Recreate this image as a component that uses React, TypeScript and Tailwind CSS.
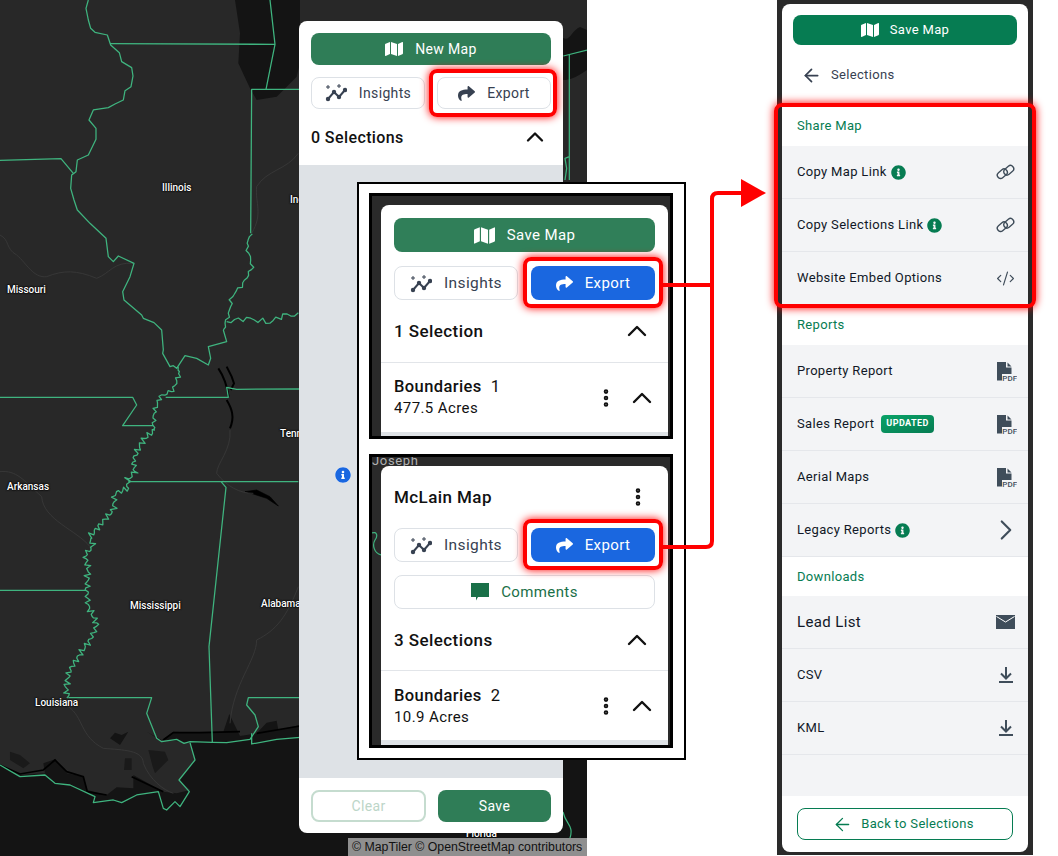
import React from 'react';
import { ArrowLeft, ChevronRight, ChevronUp, CodeXml, EllipsisVertical } from 'lucide-react';
import { FaInfoCircle, FaMap, FaShare } from 'react-icons/fa';

const labelClass = "absolute text-[10px] leading-none font-medium text-white whitespace-nowrap [text-shadow:0_0_2px_#000,0_0_2px_#000,0_0_1px_#000]";

const mapLabels = [
  { text: 'Illinois', pos: 'left-[162px] top-[183px]' },
  { text: 'Indiana', pos: 'left-[290px] top-[195px]' },
  { text: 'Missouri', pos: 'left-[7px] top-[285px]' },
  { text: 'Tennessee', pos: 'left-[280px] top-[429px]' },
  { text: 'Arkansas', pos: 'left-[7px] top-[482px]' },
  { text: 'Alabama', pos: 'left-[261px] top-[599px]' },
  { text: 'Mississippi', pos: 'left-[130px] top-[601px]' },
  { text: 'Louisiana', pos: 'left-[35px] top-[698px]' },
  { text: 'Florida', pos: 'left-[466px] top-[829px]' },
];

// rivers: subdivide a traced line and push points sideways so it meanders
function wiggle(pts: number[][], amp: number, step: number) {
  let d = `M${pts[0][0]} ${pts[0][1]}`;
  let n = 0;
  for (let i = 1; i < pts.length; i++) {
    const [x0, y0] = pts[i - 1];
    const [x1, y1] = pts[i];
    const len = Math.hypot(x1 - x0, y1 - y0);
    const count = Math.max(1, Math.round(len / step));
    for (let k = 1; k <= count; k++) {
      n++;
      const t = k / count;
      const off = amp * Math.sin(n * 1.9) + amp * 0.6 * Math.sin(n * 3.3);
      const x = x0 + (x1 - x0) * t + (-(y1 - y0) / len) * off;
      const y = y0 + (y1 - y0) * t + ((x1 - x0) / len) * off;
      d += `L${x.toFixed(1)} ${y.toFixed(1)}`;
    }
  }
  return d;
}

const lowerRiver = wiggle([[465, 0], [428, 30], [400, 90], [405, 130], [380, 150], [385, 175], [345, 190], [340, 240], [300, 285], [270, 320], [278, 350], [255, 375], [265, 420], [260, 480], [265, 530], [292, 585], [270, 630], [235, 680], [210, 720], [197, 770], [205, 803]], 7, 6);
const midRiver = wiggle([[460, 1290], [462, 1240], [480, 1190], [520, 1170], [540, 1115], [530, 1105]], 5, 7);
const ohioRiver = wiggle([[680, 965], [740, 955], [810, 968], [850, 945], [895, 945]], 6, 12);
const wabash = wiggle([[670, 990], [690, 930], [695, 890], [730, 850], [758, 800], [740, 740], [752, 700]], 4, 10);

const MapShapes: React.FC = () => (
  <svg className="absolute inset-0" width="587" height="856" viewBox="0 0 587 856" fill="none">
    <rect x="300" y="740" width="287" height="116" fill="#141414" />
    <path d="M563 38C570 42 572 30 580 27L587 30V70C575 78 570 80 563 80Z" fill="#141414" />
    {/* north half, traced at 3x */}
    <g transform="scale(0.33333)">
      <path d="M705 0L720 100L715 190L750 265L770 300L830 290L890 230L900 190V0Z" fill="#141414" />
      <path d="M0 705C30 720 15 745 50 765C80 790 100 835 140 830C190 810 230 810 290 835C330 820 340 785 400 790M895 460C860 510 800 510 770 560C765 610 790 640 755 700" stroke="#3a3a3a" strokeWidth="2.5" />
      <path d="M655 1105C672 1130 680 1150 686 1190M680 1100L695 1130L702 1150L692 1170M680 1200C695 1225 705 1250 690 1285" stroke="#000" strokeWidth="6" />
      <g stroke="#3fb47f" strokeWidth="3.8" strokeLinejoin="round">
        <path d="M265 0L258 25L265 60L272 85L285 97L322 105L332 135L358 158L365 185L395 203L399 228L393 260L375 272L370 300L345 312L325 323L280 330L267 360L288 385L288 418L265 465L232 480L228 515L215 525L212 565L222 600L232 630L270 670L318 715L325 770L340 785L355 768L402 790L390 830L368 875L372 900L425 945L430 955L462 968L485 990L490 1050L488 1060L510 1100L520 1097L530 1105L555 1067L590 1075L625 1095L632 1075L625 1040L680 1025L670 990" />
        <path d={wabash} />
        <path d="M752 700L755 268H900" />
        <path d="M330 131L825 133M810 0L825 133L798 268M0 481L183 476L220 520M0 1192H398L410 1215L368 1277H460" />
        <path d={midRiver} />
        <path d="M497 1192L685 1192L680 1162L710 1168L900 1167" />
        <path d={ohioRiver} />
        <path d="M1690 168L1761 150M1708 165V540M1708 470L1695 475L1700 505L1695 540" />
      </g>
    </g>
    {/* south half, traced at 3x */}
    <g transform="translate(0 430) scale(0.33333)">
      <path d="M0 1005L60 1035L135 1030L130 1000L165 988L200 1030L250 1040L262 1080L320 1095L350 1072L400 1075L400 1035L490 1085L530 1090L570 1080L537 1050L585 990L570 938L500 930L480 930L440 905L385 905L360 945L330 925L345 908L365 915L385 905L440 905L485 930L520 905L600 908L670 905L688 852L720 918L770 910L800 878L830 872L835 900L900 885V1278H0Z" fill="#141414" />
      <path d="M30 965L60 975L90 1000L70 1015L30 990ZM375 985L395 985L395 1020L372 1020ZM445 960L495 965L505 990L465 1030L458 1010Z" fill="#1a1a1a" />
      <path d="M735 185L770 180L810 200L835 228L800 205L760 192Z" fill="#000" stroke="#000" strokeWidth="2" />
      <path d="M0 1005L60 1032L130 1020L165 990L200 1025L250 1040L262 1085L320 1095M395 1040L490 1085M490 930L520 908L600 908L720 905M770 910L900 888" stroke="#000" strokeWidth="5" />
      <path d="M0 125C50 120 70 150 125 200C130 270 230 300 270 350M690 0C695 60 650 100 650 130C680 170 720 190 760 190M895 470C860 560 830 600 770 630C770 690 700 760 690 880M205 830C250 860 240 920 310 955C370 960 430 960 430 1000C450 1050 490 1080 520 1090" stroke="#3a3a3a" strokeWidth="2.5" />
      <g stroke="#3fb47f" strokeWidth="3.8" strokeLinejoin="round">
        <path d={lowerRiver} />
        <path d="M0 481H258M385 155H665L895 155M663 155L678 172L627 650L637 937" />
        <path d="M205 803H455L440 850L470 925L485 935L530 928L552 940L570 935L637 937L680 938L750 928L775 890L765 855L740 825L745 803H900" />
        <path d="M755 910V942L830 928L900 922" />
        <path d="M0 1005L60 1040L135 1035L165 1060L210 1065L285 1100L280 1118L340 1110L365 1118L410 1095L475 1085L490 1135L500 1140L525 1115L540 1130L568 1085L537 1050L585 990L570 938" />
      </g>
    </g>
    <path d="M563 812C566 825 574 825 570 838L566 856M478 856L480 838" stroke="#3fb47f" strokeWidth="1.2" />
  </svg>
);

const InsightsIcon: React.FC = () => (
  <svg width="22" height="18" viewBox="0 0 22 18" fill="none" stroke="#374151">
    <path d="M3 15L9 8L14 13L20 6" strokeWidth="2" />
    <g fill="#374151" stroke="none">
      <circle cx="3" cy="15" r="2.2" />
      <circle cx="9" cy="8" r="2.2" />
      <circle cx="14" cy="13" r="2.2" />
      <circle cx="20" cy="6" r="2.2" />
    </g>
    <path d="M3 1V5M1 3H5M14 0V4M12 2H16" strokeWidth="1" />
  </svg>
);

const CommentIcon: React.FC = () => (
  <svg width="18" height="18" viewBox="0 0 18 18" fill="#1a7048">
    <path d="M0 0H18V14H7L5 17.500V14H0Z" />
  </svg>
);

const PdfIcon: React.FC = () => (
  <svg width="20" height="22" viewBox="0 0 20 22">
    <path d="M0 0H9V5.500H14.500V18.500H0Z" fill="#3f4d5a" />
    <path d="M10.500 0.500L14.500 4.500H10.500Z" fill="#3f4d5a" />
    <rect x="5" y="12" width="15" height="8" fill="#f3f4f6" />
    <text x="5.300" y="18.700" fontSize="8" fontFamily="Roboto" fontWeight="500" fill="#3f4d5a">PDF</text>
  </svg>
);

const MailIcon: React.FC = () => (
  <svg width="19" height="14" viewBox="0 0 19 14">
    <rect width="19" height="14" fill="#3f4d5a" />
    <path d="M0.500 1.500L9.500 7L18.500 1.500" stroke="#fff" strokeWidth="1" fill="none" />
  </svg>
);

const DownloadIcon: React.FC = () => (
  <svg width="14" height="16" viewBox="0 0 14 16" fill="none" stroke="#3f4d5a" strokeWidth="2">
    <path d="M7 0V11M2 6.500L7 11.500L12 6.500M0 15H14" />
  </svg>
);

// two oval rings leaning to the right, like the chain in the reference
const ChainIcon: React.FC = () => (
  <svg width="19" height="16" viewBox="0 0 19 16" fill="none" stroke="#3f4d5a" strokeWidth="1.4">
    <rect x="0.800" y="6.500" width="11" height="6.500" rx="3.250" transform="rotate(-40 6.300 9.750)" />
    <rect x="7.200" y="3" width="11" height="6.500" rx="3.250" transform="rotate(-40 12.700 6.250)" />
  </svg>
);

type ActionProps = { small?: boolean; blue?: boolean };

const Highlight: React.FC<{ className: string }> = ({ className }) => (
  <div className={`absolute border-4 border-[#ff0000] rounded-lg shadow-[0_0_8px_#ff0000] pointer-events-none ${className}`} />
);

const ActionRow: React.FC<ActionProps> = ({ small, blue }) => (
  <div className={small ? 'grid grid-cols-2 gap-3' : 'grid grid-cols-2 gap-[13px]'}>
    <button className={`flex items-center justify-center gap-3 bg-white border border-[#dde1e6] text-[#374151] tracking-wide rounded-lg ${small ? 'h-8 text-sm' : 'h-[34px] text-[15.500px] pt-px'}`}>
      <InsightsIcon />
      Insights
    </button>
    <div className="relative">
      {small ? <Highlight className="-left-2 -top-2 -right-1.5 -bottom-2" /> : <Highlight className="-left-2 -top-[9px] -right-2 -bottom-2" />}
      <button className={`relative w-full flex items-center justify-center gap-3 tracking-wide rounded-lg ${small ? 'h-8 text-sm' : 'h-[34px] text-[15px]'} ${blue ? 'bg-[#1a67e0] text-white font-[450]' : 'bg-white border border-[#dde1e6] text-[#374151]'}`}>
        <FaShare size={17} className={blue ? 'text-white' : 'text-[#374151]'} />
        Export
      </button>
    </div>
  </div>
);

const BoundaryRow: React.FC<{ count: string; acres: string; lifted?: boolean }> = ({ count, acres, lifted }) => (
  <div className="h-[70px] border-t border-[#e2e5e9] px-[13px] flex items-center justify-between">
    <div className={`text-[#111] tracking-wide ${lifted ? 'pb-0.5' : ''}`}>
      <div className="text-[16.500px] leading-[22px] font-medium">Boundaries&nbsp;&nbsp;<span className="font-normal">{count}</span></div>
      <div className="text-[15px] leading-[20px]">{acres}</div>
    </div>
    <div className="flex items-center gap-[9px] -mr-[3px]">
      <EllipsisVertical size={22} strokeWidth={3} className="text-[#111]" />
      <ChevronUp size={32} strokeWidth={1.8} className="text-[#111]" />
    </div>
  </div>
);

const CalloutFrame: React.FC<{ className: string; children: React.ReactNode }> = ({ className, children }) => (
  <div className={`relative w-[304px] border-[3px] border-black bg-[#2a2a2a] overflow-hidden pl-[9px] pr-[2px] pt-[9px] ${className}`}>
    {children}
  </div>
);

const Callout: React.FC = () => (
  <div className="absolute left-[357px] top-[182px] w-[329px] h-[578px] border-2 border-black bg-white pl-[10px] pt-[9px] flex flex-col gap-[15px]">
    <CalloutFrame className="h-[246px]">
      <div className="bg-white rounded-t-lg h-full flex flex-col">
        <div className="px-[13px] pt-[13px]">
          <button className="w-full h-[34px] mb-[14px] rounded-lg bg-[#307f59] text-white text-[15px] font-[450] tracking-wide flex items-center justify-center gap-3">
            <FaMap size={21} />
            Save Map
          </button>
          <ActionRow blue />
          <div className="h-[62px] pt-0.5 flex items-center justify-between text-[17px] font-medium text-[#111] tracking-wide">
            1 Selection
            <ChevronUp size={32} strokeWidth={1.8} className="mr-0.5 -mt-0.5" />
          </div>
        </div>
        <BoundaryRow count="1" acres="477.5 Acres" lifted />
        <div className="flex-1 bg-[#dee2e6]" />
      </div>
    </CalloutFrame>
    <CalloutFrame className="h-[294px]">
      <span className="absolute left-0 -top-[3px] text-[13px] leading-[14px] tracking-wider text-[#b0b0b0]">Joseph</span>
      <svg className="absolute left-0 top-[74px]" width="9" height="26" viewBox="0 0 9 26" fill="none" stroke="#3fb47f" strokeWidth="1.2">
        <path d="M0 2C5 0 6 5 3 9C0 14 2 22 9 24" />
      </svg>
      <div className="relative bg-white rounded-t-lg h-full flex flex-col">
        <div className="px-[13px]">
          <div className="h-[62px] pt-0.5 flex items-center justify-between text-[17px] font-medium text-[#111] tracking-wide">
            McLain Map
            <EllipsisVertical size={22} strokeWidth={3} className="mr-1.5 -mt-0.5" />
          </div>
          <ActionRow blue />
          <button className="w-full h-[34px] mt-[13px] rounded-lg border border-[#dde1e6] bg-white text-[#1a7048] text-[15px] font-[450] tracking-wide flex items-center justify-center gap-3">
            <CommentIcon />
            Comments
          </button>
          <div className="h-[61px] pt-0.5 flex items-center justify-between text-[17px] font-medium text-[#111] tracking-wide">
            3 Selections
            <ChevronUp size={32} strokeWidth={1.8} className="mr-0.5 -mt-0.5" />
          </div>
        </div>
        <BoundaryRow count="2" acres="10.9 Acres" />
        <div className="flex-1 bg-[#dee2e6]" />
      </div>
    </CalloutFrame>
  </div>
);

const Connector: React.FC = () => (
  <svg className="absolute left-[650px] top-[170px] pointer-events-none" width="130" height="390" viewBox="0 0 130 390" fill="none">
    <path d="M13 115H62V29Q62 23 68 23H95M13 377H56Q62 377 62 371V115" stroke="#ff0000" strokeWidth="4" />
    <path d="M91 9L116 23L91 37Z" fill="#ff0000" />
  </svg>
);

const LeftPanel: React.FC = () => (
  <div className="absolute left-[299px] top-[21px] w-[264px] h-[812px] bg-white rounded-lg flex flex-col overflow-visible">
    <div className="px-3 pt-3">
      <button className="w-full h-8 mb-3 rounded-lg bg-[#2f7d57] text-white text-sm font-[450] tracking-wide flex items-center justify-center gap-3">
        <FaMap size={18} />
        New Map
      </button>
      <ActionRow small />
      <div className="h-14 pt-0.5 flex items-center justify-between text-base font-medium text-[#111] tracking-wide">
        0 Selections
        <ChevronUp size={28} className="mr-0.5 -mt-0.5" />
      </div>
    </div>
    <div className="relative flex-1 bg-[#dee2e6]">
      <div className="absolute left-[36px] top-[302px] w-4 h-4 rounded-full bg-white" />
      <FaInfoCircle size={16} className="absolute left-[36px] top-[302px] text-[#1a67e0]" />
    </div>
    <div className="h-[55px] px-3 grid grid-cols-[115px_113px] gap-3 items-center">
      <button className="h-8 rounded-lg border-2 border-[#c5dccf] text-[#bcd6c8] text-sm font-[450] tracking-wide">Clear</button>
      <button className="h-8 rounded-lg bg-[#2f7d57] text-white text-sm font-[450] tracking-wide">Save</button>
    </div>
  </div>
);

const Row: React.FC<{ label: string; info?: boolean; big?: boolean; badge?: boolean; icon: React.ReactNode }> = ({ label, info, big, badge, icon }) => (
  <div className="h-[53px] shrink-0 border-b border-[#e5e7eb] pl-[15px] pr-[13px] flex items-center justify-between">
    <div className={`flex items-center text-[#111827] tracking-wide ${big ? 'text-[15px]' : 'text-[13px]'}`}>
      {label}
      {info && <FaInfoCircle size={15} className="ml-1 text-[#067c52]" />}
      {badge && (
        <span className="ml-[7px] h-[18px] px-[5px] flex items-center rounded-sm bg-gradient-to-br from-[#0aa368] to-[#067c52] text-white text-[9px] font-bold tracking-wider">UPDATED</span>
      )}
    </div>
    {icon}
  </div>
);

const Heading: React.FC<{ title: string; h: string }> = ({ title, h }) => (
  <div className={`${h} shrink-0 pl-[15px] flex items-center text-[13px] font-[450] tracking-wide text-[#067c52]`}>{title}</div>
);

const PdfEnd = <div className="-mr-[2px] mt-[3px]"><PdfIcon /></div>;
const Download = <div className="mr-[2px]"><DownloadIcon /></div>;

const RightPanel: React.FC = () => (
  <div className="ml-[190px] w-[256px] h-[855px] bg-[#2a2a2a] pl-[5px] pr-[5px] pt-1">
    <div className="w-[246px] h-[848px] bg-white rounded-lg flex flex-col overflow-hidden">
      <div className="px-[11px] pt-[11px] shrink-0">
        <button className="w-full h-[30px] rounded-lg bg-[#067c52] text-white text-[13px] font-[450] tracking-wide flex items-center justify-center gap-[11px]">
          <FaMap size={18} />
          Save Map
        </button>
        <div className="h-[60px] flex items-center gap-[9px] pl-2 text-[13px] tracking-wide text-[#374151]">
          <ArrowLeft size={21} />
          Selections
        </div>
      </div>
      <Heading title="Share Map" h="h-[41px]" />
      <div className="bg-[#f3f4f6] flex flex-col">
        <Row label="Copy Map Link" info icon={<ChainIcon />} />
        <Row label="Copy Selections Link" info icon={<ChainIcon />} />
        <Row label="Website Embed Options" icon={<CodeXml size={19} strokeWidth={1.5} className="text-[#3f4d5a]" />} />
      </div>
      <Heading title="Reports" h="h-[40px]" />
      <div className="bg-[#f3f4f6] flex flex-col">
        <Row label="Property Report" icon={PdfEnd} />
        <Row label="Sales Report" badge icon={PdfEnd} />
        <Row label="Aerial Maps" icon={PdfEnd} />
        <Row label="Legacy Reports" info icon={<ChevronRight size={34} strokeWidth={1.5} className="text-[#3f4d5a] -mr-2" />} />
      </div>
      <Heading title="Downloads" h="h-[39px]" />
      <div className="flex-1 bg-[#f3f4f6] flex flex-col">
        <Row label="Lead List" big icon={<MailIcon />} />
        <Row label="CSV" icon={Download} />
        <Row label="KML" icon={Download} />
      </div>
      <div className="h-14 shrink-0 px-[15px] flex items-center">
        <button className="w-full h-8 rounded-lg border border-[#067c52] text-[#067c52] text-[13px] font-[450] tracking-wide flex items-center justify-center gap-2">
          <ArrowLeft size={21} strokeWidth={1.5} className="-ml-1" />
          Back to Selections
        </button>
      </div>
    </div>
  </div>
);

const App: React.FC = () => {
  return (
    <div className="relative w-[1058px] h-[856px] bg-white overflow-hidden flex font-['Roboto',sans-serif]">
      <div className="relative w-[587px] h-full shrink-0 bg-[#282828] overflow-hidden">
        <MapShapes />
        {mapLabels.map(l => (
          <span key={l.text} className={`${labelClass} ${l.pos}`}>{l.text}</span>
        ))}
        <LeftPanel />
        <div className="absolute right-0 bottom-0 w-[239px] h-[18px] bg-[#8f8f8f] text-[#111] text-[12.300px] leading-[18px] pl-1 whitespace-nowrap font-['Liberation_Sans',sans-serif]">
          © MapTiler © OpenStreetMap contributors
        </div>
      </div>
      <RightPanel />
      <Callout />
      <Connector />
      <Highlight className="left-[774px] top-[103px] w-[262px] h-[205px]" />
    </div>
  );
};

export default App;
